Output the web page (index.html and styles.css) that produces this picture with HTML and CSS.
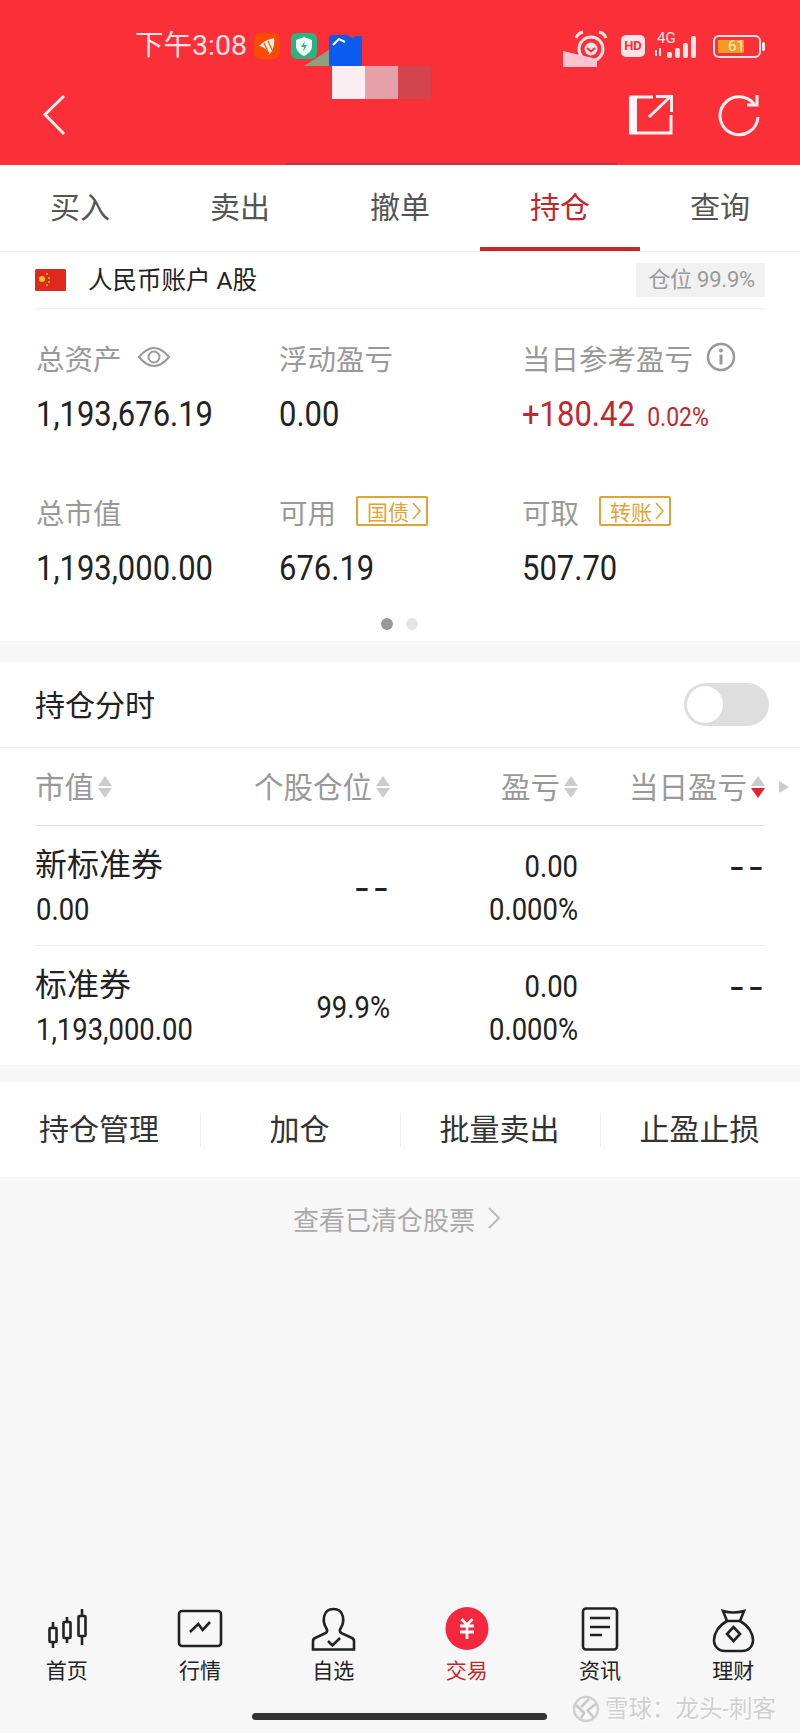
FILE: index.html
```html
<!DOCTYPE html>
<html lang="zh-CN">
<head>
  <meta charset="UTF-8" />
  <title>持仓</title>
  <meta name="viewport" content="width=device-width, initial-scale=1.0" />
  <link rel="stylesheet" href="styles.css">
</head>
<body>
<div class="app">

  <header class="top">
    <div class="status">
      <span class="clock">下午3:08</span>
      <svg class="app-icon" viewBox="0 0 26 26"><rect width="26" height="26" rx="6" fill="#f94a06"/><path d="M5 13C10 8 15 6 20 5C21 11 19 18 15 22C14 18 11 14 5 13Z" fill="#fff6e0"/><path d="M10 10L15 21M14 8L18 17" stroke="#f94a06" stroke-width="1.200"/></svg>
      <svg class="app-icon" viewBox="0 0 26 26"><rect width="26" height="26" rx="6" fill="#28b583"/><path d="M13 4L21 7V13C21 18 17 21 13 23C9 21 5 18 5 13V7Z" fill="#f2fbf8"/><path d="M14 8L10 14H13L12 19L16 12H13Z" fill="#28b583"/></svg>
      <svg class="app-icon blue" viewBox="0 0 33 31"><path d="M0 3Q0 0 4 0H17Q20 0 21 2L24 3L27 1H33V31H0Z" fill="#0a5bf0"/><path d="M4 10L10 4L16 7" stroke="#fff" stroke-width="2" fill="none"/></svg>
      <span class="status-right">
        <svg class="alarm" viewBox="0 0 34 34"><circle cx="17" cy="19" r="12" fill="none" stroke="#fde3e5" stroke-width="3"/><circle cx="17" cy="19" r="6.500" fill="#fde3e5"/><path d="M13 18L17 21.500L21 18" stroke="#fb2f37" stroke-width="2" fill="none"/><path d="M2 8Q4 3 9 2M32 8Q30 3 25 2" stroke="#fde3e5" stroke-width="3" fill="none"/></svg>
        <span class="hd">HD</span>
        <span class="net">
          <span class="net-label">4G</span>
          <svg class="bars" viewBox="0 0 48 24"><g fill="#fde3e5"><rect x="0" y="15" width="2" height="6"/><rect x="4" y="13" width="2" height="8"/><rect x="12" y="17" width="5" height="6" rx="2"/><rect x="20" y="13" width="5" height="10" rx="2"/><rect x="28" y="8" width="5" height="15" rx="2"/><rect x="36" y="1" width="5" height="22" rx="2"/></g></svg>
        </span>
        <span class="battery"><span class="battery-fill">61</span></span>
      </span>
    </div>
    <nav class="top-nav">
      <svg class="back" viewBox="0 0 24 42"><path d="M22 2L3 20.500L22 40" fill="none" stroke="#fff0f0" stroke-width="3"/></svg>
      <div class="top-actions">
        <svg class="share" viewBox="0 0 46 42"><path d="M26 3H4V39H44V21" fill="none" stroke="#fff0f0" stroke-width="3"/><rect x="2" y="3" width="8" height="37" fill="#fff6f6"/><path d="M22 23L43 3M29 2.500H44.500V18" fill="none" stroke="#fff0f0" stroke-width="3"/></svg>
        <svg class="refresh" viewBox="0 0 44 44"><path d="M37 11A19 19 0 1 0 41 24" fill="none" stroke="#fff0f0" stroke-width="3"/><path d="M40 2V12H30" fill="none" stroke="#fff0f0" stroke-width="3"/></svg>
      </div>
    </nav>
    <i class="top-line"></i>
    <div class="blur-patch">
      <i class="blur-a"></i><i class="blur-b"></i><i class="blur-c"></i>
    </div>
    <svg class="blur-tri" viewBox="0 0 28 18"><path d="M0 18L28 0V18Z" fill="#8f9e80"/></svg>
    <svg class="blur-wedge" viewBox="0 0 34 16"><path d="M0 0L34 8V16H0Z" fill="#ffc4cf"/></svg>
  </header>

  <div class="tabs">
    <a class="tab">买入</a>
    <a class="tab">卖出</a>
    <a class="tab">撤单</a>
    <a class="tab active">持仓</a>
    <a class="tab">查询</a>
  </div>

  <section class="account">
    <div class="account-row">
      <svg class="flag" viewBox="0 0 31 22"><rect width="31" height="22" rx="1.500" fill="#de2a1e"/><circle cx="7" cy="10" r="3" fill="#f5c518"/><circle cx="12" cy="5" r="1" fill="#f5c518"/><circle cx="14" cy="9" r="1" fill="#f5c518"/><circle cx="14" cy="13" r="1" fill="#f5c518"/><circle cx="12" cy="16" r="1" fill="#f5c518"/></svg>
      <span class="account-name">人民币账户 A股</span>
      <span class="position">仓位 99.9%</span>
    </div>

    <div class="stats">
      <div class="stat">
        <div class="stat-label">总资产
          <svg class="eye" viewBox="0 0 34 24"><path d="M2 12Q17 -6 32 12Q17 30 2 12Z" fill="none" stroke="#999" stroke-width="2"/><circle cx="17" cy="12" r="5.500" fill="none" stroke="#999" stroke-width="2"/></svg>
        </div>
        <div class="stat-value">1,193,676.19</div>
      </div>
      <div class="stat">
        <div class="stat-label">浮动盈亏</div>
        <div class="stat-value">0.00</div>
      </div>
      <div class="stat">
        <div class="stat-label">当日参考盈亏
          <svg class="info" viewBox="0 0 30 30"><circle cx="15" cy="15" r="13" fill="none" stroke="#999" stroke-width="2.500"/><rect x="13.500" y="12.500" width="3" height="10" fill="#999"/><circle cx="15" cy="8.500" r="2" fill="#999"/></svg>
        </div>
        <div class="stat-value up">+180.42<small>0.02%</small></div>
      </div>
      <div class="stat">
        <div class="stat-label">总市值</div>
        <div class="stat-value">1,193,000.00</div>
      </div>
      <div class="stat">
        <div class="stat-label">可用<span class="tag">国债<svg viewBox="0 0 9 18"><path d="M1 1L8 9L1 17" fill="none" stroke="#dfa434" stroke-width="1.500"/></svg></span></div>
        <div class="stat-value">676.19</div>
      </div>
      <div class="stat">
        <div class="stat-label">可取<span class="tag">转账<svg viewBox="0 0 9 18"><path d="M1 1L8 9L1 17" fill="none" stroke="#dfa434" stroke-width="1.500"/></svg></span></div>
        <div class="stat-value">507.70</div>
      </div>
    </div>

    <div class="dots"><i class="dot on"></i><i class="dot"></i></div>
  </section>

  <section class="holdings">
    <div class="switch-row">
      <span class="switch-label">持仓分时</span>
      <span class="toggle"><i></i></span>
    </div>

    <div class="table-head">
      <div class="grid head-cells">
        <span class="col-name">市值<i class="sort"></i></span>
        <span>个股仓位<i class="sort"></i></span>
        <span>盈亏<i class="sort"></i></span>
        <span>当日盈亏<i class="sort desc"></i></span>
      </div>
      <i class="more"></i>
    </div>

    <div class="grid row">
      <div class="col-name">
        <div class="name">新标准券</div>
        <div class="num">0.00</div>
      </div>
      <div class="num"><span class="dash">--</span></div>
      <div>
        <div class="num">0.00</div>
        <div class="num">0.000%</div>
      </div>
      <div class="top-cell"><div class="num"><span class="dash">--</span></div></div>
    </div>

    <div class="grid row last">
      <div class="col-name">
        <div class="name">标准券</div>
        <div class="num">1,193,000.00</div>
      </div>
      <div class="num">99.9%</div>
      <div>
        <div class="num">0.00</div>
        <div class="num">0.000%</div>
      </div>
      <div class="top-cell"><div class="num"><span class="dash">--</span></div></div>
    </div>
  </section>

  <div class="actions">
    <a>持仓管理</a>
    <a>加仓</a>
    <a>批量卖出</a>
    <a>止盈止损</a>
  </div>

  <div class="history">查看已清仓股票
    <svg viewBox="0 0 14 24"><path d="M2 2L12 12L2 22" fill="none" stroke="#bbb" stroke-width="2"/></svg>
  </div>

  <footer class="tabbar">
    <a class="bar-item">
      <svg viewBox="0 0 60 50"><g fill="none" stroke="#222" stroke-width="2.600"><path d="M16 17V23M16 37V43M30 12V17M30 33V38M45 4V11M45 31V40"/><rect x="12.500" y="23" width="7" height="14" rx="1"/><rect x="26.500" y="17" width="7" height="16" rx="1"/><rect x="41.500" y="11" width="7" height="20" rx="1"/></g></svg>
      首页
    </a>
    <a class="bar-item">
      <svg viewBox="0 0 60 50"><rect x="9" y="6" width="42" height="35" rx="3" fill="none" stroke="#222" stroke-width="2.600"/><path d="M20 27L28.300 19L32.700 25L40 17" fill="none" stroke="#222" stroke-width="2.600"/></svg>
      行情
    </a>
    <a class="bar-item">
      <svg viewBox="0 0 60 50"><path d="M10 44.500H51V36Q51 33.500 48 32.500L38 28Q36 26 37.500 23.500C42 17 41.500 4 30.500 4C19.500 4 19 17 23.500 23.500Q25 26 23 28L13 32.500Q10 33.500 10 36Z" fill="none" stroke="#222" stroke-width="2.600"/><path d="M25 36L29.500 40.500L37 33" fill="none" stroke="#222" stroke-width="2.600"/></svg>
      自选
    </a>
    <a class="bar-item active">
      <svg viewBox="0 0 60 50"><circle cx="30" cy="23.500" r="21.500" fill="#f5273c"/><path d="M24.500 14L30 20L35.500 14M23 21H37M23 27H37M30 20V34" fill="none" stroke="#fff" stroke-width="2.800"/></svg>
      交易
    </a>
    <a class="bar-item">
      <svg viewBox="0 0 60 50"><rect x="13" y="3.500" width="34" height="41" rx="3" fill="none" stroke="#222" stroke-width="2.600"/><path d="M20 13H40M20 22H40M20 30H32" fill="none" stroke="#222" stroke-width="2.600"/></svg>
      资讯
    </a>
    <a class="bar-item">
      <svg viewBox="0 0 60 50"><path d="M20 6Q30 9 41 6L37 16H24Z" fill="none" stroke="#222" stroke-width="2.600"/><path d="M24 16C15 21 11 29 11 35C11 42 16 46 22 46H39C45 46 50 42 50 35C50 29 46 21 37 16" fill="none" stroke="#222" stroke-width="2.600"/><path d="M30.500 22L37 29L30.500 36L24 29Z" fill="none" stroke="#222" stroke-width="2.600"/></svg>
      理财
    </a>
  </footer>

  <i class="home-bar"></i>
  <div class="watermark">
    <svg viewBox="0 0 28 28"><circle cx="14" cy="14" r="12" fill="none" stroke="#d0d0d0" stroke-width="2.500"/><path d="M4 10L12 18L9 23M17 4L9 12M15 15L22 23M24 9L16 15" fill="none" stroke="#c8c8c8" stroke-width="2.500"/></svg>
    <span>雪球：龙头-刺客</span>
  </div>

</div>
</body>
</html>
```

FILE: styles.css
```css
:root {
  --red: #fb2f37;
  --active: #c1272d;
  --text: #222;
  --muted: #999;
  --line: #eee;
  --page: #f7f7f7;
  --gold: #dfa434;
  --font: Roboto, "Noto Sans CJK SC", sans-serif;
}

* {
  margin: 0;
  padding: 0;
  box-sizing: border-box;
}

html, body {
  height: 100%;
  font-family: var(--font);
  color: var(--text);
  background-color: var(--page);
}

i {
  display: block;
  font-style: normal;
}

.app {
  position: relative;
  display: flex;
  flex-direction: column;
  width: 800px;
  height: 1733px;
  overflow: hidden;
}

/* red header */
.top {
  position: relative;
  height: 165px;
  padding-top: 30px;
  background-color: var(--red);
}

.status {
  display: flex;
  align-items: flex-start;
  height: 32px;
  padding-left: 135px;
  padding-right: 39px;
  margin-bottom: 20px;
}

.clock {
  width: 119px;
  font-size: 28.500px;
  line-height: 32px;
  color: #fde3e5;
  white-space: nowrap;
}

.app-icon {
  width: 26px;
  height: 26px;
  margin-top: 3px;
  margin-right: 11px;
}

.app-icon.blue {
  width: 33px;
  height: 31px;
  margin-top: 5px;
  margin-left: 1px;
  margin-right: 0;
  position: relative;
  z-index: 1;
}

.status-right {
  display: flex;
  align-items: flex-start;
  margin-left: auto;
}

.alarm {
  width: 34px;
  height: 34px;
  margin-right: 13px;
}

.hd {
  width: 24px;
  height: 22px;
  margin-top: 5px;
  margin-right: 10px;
  border-radius: 5px;
  background-color: #fde3e5;
  color: var(--red);
  font-size: 13px;
  font-weight: 700;
  line-height: 22px;
  text-align: center;
}

.net {
  position: relative;
  width: 48px;
  height: 32px;
  margin-right: 10px;
}

.net-label {
  position: absolute;
  left: 2px;
  top: 1px;
  font-size: 15px;
  line-height: 14px;
  color: #fde3e5;
}

.bars {
  position: absolute;
  left: 0;
  top: 5px;
  width: 48px;
  height: 24px;
}

.battery {
  position: relative;
  width: 48px;
  height: 23px;
  margin-top: 5px;
  padding: 3px;
  border: 2px solid #fde3e5;
  border-radius: 6px;
}

.battery::after {
  content: "";
  position: absolute;
  right: -6px;
  top: 5px;
  width: 3px;
  height: 9px;
  border-radius: 2px;
  background-color: #fde3e5;
}

.battery-fill {
  display: block;
  width: 26px;
  height: 13px;
  padding-left: 10px;
  background-color: #f59a23;
  color: #fff3c4;
  font-size: 15px;
  line-height: 13px;
}

.top-nav {
  display: flex;
  justify-content: space-between;
  align-items: center;
  height: 66px;
  padding-left: 42px;
  padding-right: 39px;
}

.back {
  width: 24px;
  height: 42px;
}

.top-actions {
  display: flex;
  align-items: center;
  gap: 44px;
}

.share {
  width: 46px;
  height: 42px;
}

.refresh {
  width: 44px;
  height: 44px;
}

.top-line {
  position: absolute;
  left: 286px;
  bottom: 0;
  width: 331px;
  height: 2px;
  background-color: #c8333a;
}

/* mosaic over the account name */
.blur-patch {
  position: absolute;
  left: 332px;
  top: 66px;
  display: flex;
  height: 33px;
}

.blur-a, .blur-b {
  width: 33px;
}

.blur-a {
  background-color: #fbeef2;
}

.blur-b {
  background-color: #e5a0a8;
}

.blur-c {
  width: 33px;
  background-color: #d2454f;
}

.blur-tri {
  position: absolute;
  left: 304px;
  top: 48px;
  width: 28px;
  height: 18px;
}

.blur-wedge {
  position: absolute;
  left: 563px;
  top: 51px;
  width: 34px;
  height: 16px;
}

/* tabs */
.tabs {
  display: flex;
  height: 87px;
  background-color: #fff;
  border-bottom: 1px solid var(--line);
}

.tab {
  flex: 1;
  height: 86px;
  font-size: 30px;
  line-height: 86px;
  text-align: center;
  color: #555;
}

.tab.active {
  color: var(--active);
  border-bottom: 4px solid var(--active);
}

/* account summary */
.account {
  height: 389px;
  background-color: #fff;
}

.account-row {
  display: flex;
  align-items: center;
  height: 57px;
  margin: 0 35px;
  border-bottom: 1px solid var(--line);
}

.flag {
  width: 31px;
  height: 22px;
  margin-right: 22px;
}

.account-name {
  padding-bottom: 4px;
  font-size: 24.500px;
}

.position {
  height: 34px;
  margin-left: auto;
  padding: 0 10px 0 12px;
  font-size: 22px;
  letter-spacing: -0.2px;
  line-height: 33px;
  color: var(--muted);
  background-color: #f1f1f1;
}

.stats {
  display: grid;
  grid-template-columns: 243px 243px auto;
  row-gap: 54px;
  padding-top: 28px;
  padding-left: 36px;
}

.stat-label {
  display: flex;
  align-items: center;
  height: 40px;
  font-size: 28.500px;
  color: var(--muted);
}

/* the digits in the app are narrower than Roboto */
.stat-value {
  margin-top: 18px;
  font-size: 35px;
  line-height: 40px;
  color: var(--text);
  transform: scaleX(0.885);
  transform-origin: left center;
  white-space: nowrap;
}

.stat-value.up {
  color: var(--active);
}

.stat-value small {
  margin-left: 14px;
  font-size: 26px;
}

.eye {
  width: 34px;
  height: 24px;
  margin-left: 15px;
}

.info {
  width: 30px;
  height: 30px;
  margin-left: 13px;
}

.tag {
  display: flex;
  align-items: center;
  height: 30px;
  margin-left: 20px;
  padding: 0 5px 0 9px;
  border: 2px solid var(--gold);
  border-radius: 2px;
  font-size: 21px;
  color: var(--gold);
}

.tag svg {
  width: 9px;
  height: 18px;
  margin-left: 3px;
}

.dots {
  display: flex;
  justify-content: center;
  gap: 13px;
  margin-top: 29px;
  padding-right: 2px;
}

.dot {
  width: 12px;
  height: 12px;
  border-radius: 50%;
  background-color: #e4e4e4;
}

.dot.on {
  background-color: #999;
}

/* holdings table */
.holdings {
  margin-top: 21px;
  background-color: #fff;
}

.switch-row {
  display: flex;
  justify-content: space-between;
  align-items: center;
  height: 86px;
  padding: 0 31px 0 35px;
  border-bottom: 1px solid var(--line);
  font-size: 30px;
}

.switch-label {
  padding-bottom: 4px;
}

.toggle {
  width: 85px;
  height: 43px;
  padding: 3px;
  border-radius: 22px;
  background-color: #dedede;
}

.toggle i {
  width: 36px;
  height: 37px;
  border-radius: 50%;
  background-color: #fff;
}

.grid {
  display: grid;
  grid-template-columns: 190px 164px 188px 187px;
  text-align: right;
}

.col-name {
  text-align: left;
}

.table-head {
  position: relative;
  padding: 0 35px 0 35px;
}

.head-cells {
  grid-template-columns: 191px 164px 188px 187px;
  height: 78px;
  align-items: center;
  font-size: 29.500px;
  color: var(--muted);
  border-bottom: 1px solid #e4e4e4;
}

.head-cells span {
  display: flex;
  align-items: center;
  justify-content: flex-end;
  padding-bottom: 4px;
}

.head-cells .col-name {
  justify-content: flex-start;
}

.sort {
  display: flex;
  flex-direction: column;
  gap: 2px;
  margin-top: 4px;
  margin-left: 4px;
}

.sort::before, .sort::after {
  content: "";
  width: 0;
  height: 0;
  border-left: 7.500px solid transparent;
  border-right: 7.500px solid transparent;
}

.sort::before {
  border-bottom: 10px solid #ccc;
}

.sort::after {
  border-top: 10px solid #ccc;
}

.sort.desc::after {
  border-top-color: #e8232e;
}

.more {
  position: absolute;
  left: 779px;
  top: 33px;
  width: 0;
  height: 0;
  border-top: 6px solid transparent;
  border-bottom: 6px solid transparent;
  border-left: 10px solid #ccc;
}

.row {
  align-items: center;
  height: 120px;
  margin: 0 35px 0 36px;
  border-bottom: 1px solid var(--line);
}

.row.last {
  height: 119px;
  border-bottom: none;
}

.name {
  height: 43px;
  margin-left: -1px;
  padding-top: 1px;
  font-size: 32px;
  line-height: 43px;
  white-space: nowrap;
}

.num {
  height: 43px;
  padding-top: 2px;
  font-size: 31px;
  line-height: 43px;
  transform: scaleX(0.885);
  transform-origin: right center;
  white-space: nowrap;
}

.col-name .num {
  transform-origin: left center;
}

.top-cell {
  height: 86px;
}

.dash {
  display: inline-block;
  margin-right: -2px;
  font-size: 27px;
  font-weight: 700;
  letter-spacing: 2px;
  transform: scaleX(1.7);
  transform-origin: right center;
}

/* action bar */
.actions {
  display: grid;
  grid-template-columns: repeat(4, 1fr);
  align-items: center;
  height: 95px;
  margin-top: 17px;
  background-color: #fff;
  font-size: 30px;
  color: #333;
}

.actions a {
  height: 34px;
  padding-right: 2px;
  line-height: 34px;
  text-align: center;
  border-left: 1px solid var(--line);
}

.actions a:first-child {
  border-left: none;
}

.history {
  display: flex;
  justify-content: center;
  align-items: center;
  gap: 12px;
  height: 40px;
  margin-top: 21px;
  padding-right: 6px;
  font-size: 26px;
  color: #aaa;
}

.history svg {
  width: 14px;
  height: 24px;
}

/* bottom tabs */
.tabbar {
  display: grid;
  grid-template-columns: repeat(6, 1fr);
  margin-top: auto;
  height: 128px;
  background-color: var(--page);
}

.bar-item {
  display: flex;
  flex-direction: column;
  align-items: center;
  font-size: 21px;
  line-height: 30px;
  color: var(--text);
}

.bar-item svg {
  width: 60px;
  height: 50px;
  margin-bottom: 1px;
}

.bar-item.active {
  color: var(--active);
}

.home-bar {
  position: absolute;
  left: 252px;
  top: 1713px;
  width: 295px;
  height: 7px;
  border-radius: 4px;
  background-color: #333;
}

.watermark {
  position: absolute;
  left: 572px;
  top: 1695px;
  display: flex;
  align-items: center;
  gap: 5px;
  color: #d0d0d0;
  font-size: 23.500px;
  line-height: 28px;
  text-shadow: 1px 1px 0 #fff;
  white-space: nowrap;
}

.watermark svg {
  width: 28px;
  height: 28px;
}
```
